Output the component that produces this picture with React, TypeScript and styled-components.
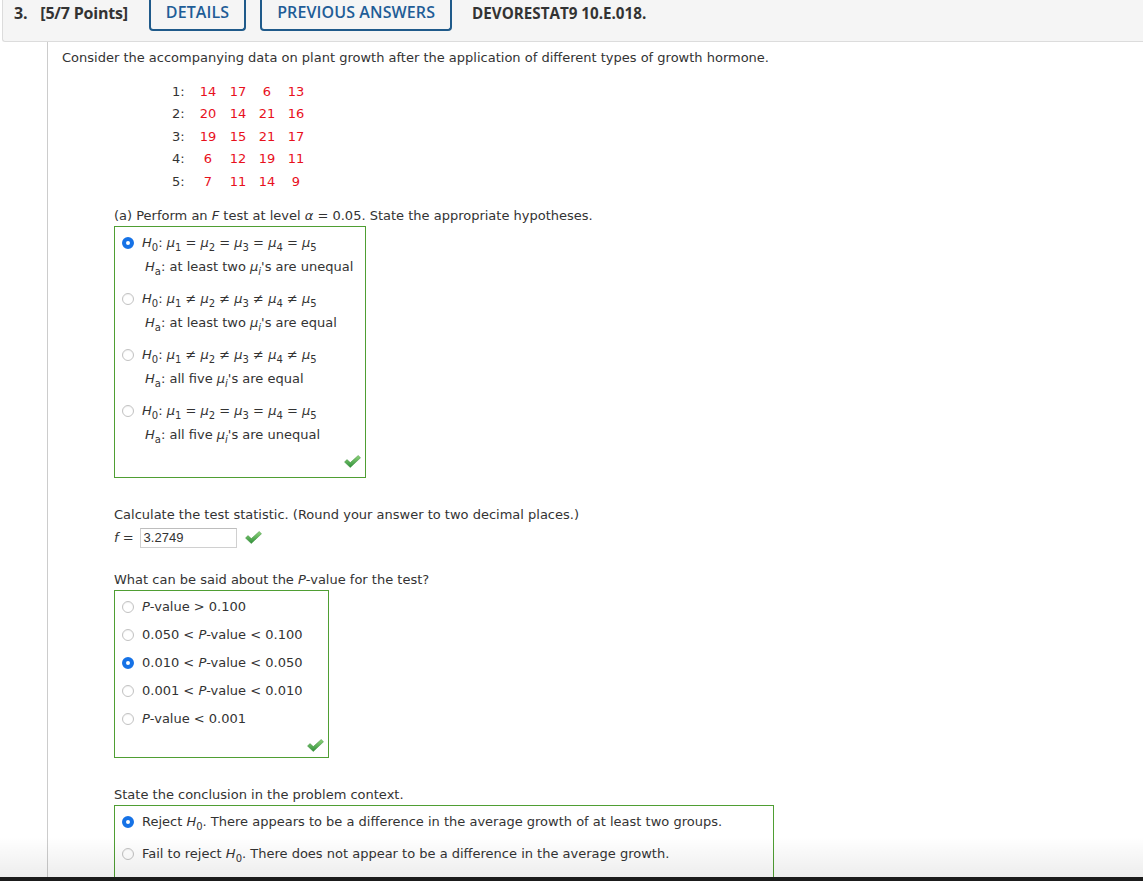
import React from 'react';
import styled, { createGlobalStyle } from 'styled-components';

const GlobalStyle = createGlobalStyle`
  html, body {
    margin: 0;
    padding: 0;
    background: #fff;
    overflow: hidden;
  }
`;

const Page = styled.div`
  position: relative;
  width: 1143px;
  height: 881px;
  overflow: hidden;
  font-family: "DejaVu Sans", Verdana, sans-serif;
  font-size: 13px;
  color: #333;
`;

const Header = styled.header`
  display: flex;
  align-items: flex-start;
  height: 41px;
  margin-left: 2px;
  background: #f5f5f5;
  border-left: 1px solid #dcdcdc;
  border-bottom: 1px solid #dcdcdc;
  border-bottom-left-radius: 3px;
  font-family: "Open Sans", sans-serif;
  font-weight: 700;
  font-size: 16px;
  color: #333;
`;

const QNum = styled.div`
  display: flex;
  gap: 13px;
  padding: 3px 0 0 11px;
  line-height: 20px;
  margin-right: 21px;
  letter-spacing: -0.2px;
`;

const TabButton = styled.div`
  display: flex;
  align-items: center;
  height: 31px;
  box-sizing: border-box;
  padding: 0 15px 5px;
  margin-right: 14px;
  border: 2px solid #1f5a8a;
  border-top: none;
  border-radius: 0 0 4px 4px;
  color: #1f5d97;
  font-weight: 600;
  letter-spacing: 0.1px;
`;

const Title = styled.div`
  padding: 3px 0 0 6px;
  line-height: 20px;
  font-size: 15.2px;
`;

const Body = styled.main`
  margin-left: 47px;
  border-left: 1px solid #ccc;
  padding: 8px 0 0 14px;
  height: 840px;
  box-sizing: border-box;
`;

const Para = styled.p<{ $top?: number }>`
  margin: ${p => p.$top ?? 0}px 0 0;
  line-height: 16px;
`;

const Part = styled.section`
  margin-left: 52px;
`;

const DataGrid = styled.div`
  display: grid;
  grid-template-columns: 21px 30px 30px 28px 30px;
  grid-auto-rows: 22.5px;
  align-items: center;
  margin: 14px 0 0 110px;
  width: max-content;
`;

const RowLabel = styled.span`
  color: #333;
`;

const Num = styled.span`
  color: #e8101c;
  text-align: center;
`;

const Var = styled.i`
  font-style: italic;
`;

const Sub = styled.sub`
  font-size: 10px;
  vertical-align: -4px;
  line-height: 0;
`;

const AnswerBox = styled.div<{ $w: number; $open?: boolean }>`
  width: ${p => p.$w}px;
  box-sizing: border-box;
  border: 1px solid #4f9e33;
  margin-top: 2px;
  padding: 4px 0 ${p => (p.$open ? 40 : 0)}px 7px;
`;

const Option = styled.div<{ $gap?: number }>`
  display: flex;
  align-items: flex-start;
  gap: 8px;
  margin-bottom: ${p => p.$gap ?? 0}px;
`;

const OptText = styled.div<{ $lh: number }>`
  line-height: ${p => p.$lh}px;
`;

const Second = styled.div`
  padding-left: 3px;
`;

const Radio = styled.span<{ $on?: boolean; $top: number }>`
  flex: none;
  width: 12px;
  height: 12px;
  margin-top: ${p => p.$top}px;
  box-sizing: border-box;
  border-radius: 50%;
  background: #fff;
  border: ${p => (p.$on ? '4px solid #1672e6' : '1px solid #c2c2c2')};
  box-shadow: ${p => (p.$on ? 'none' : 'inset 0 1px 1px rgba(0,0,0,0.06)')};
`;

const CheckRow = styled.div<{ $h: number; $right: number }>`
  display: flex;
  justify-content: flex-end;
  align-items: center;
  height: ${p => p.$h}px;
  padding-right: ${p => p.$right}px;
`;

const FRow = styled.div`
  display: flex;
  align-items: center;
  margin-top: 5px;
  height: 20px;
  gap: 6px;
`;

const FInput = styled.div`
  width: 97px;
  height: 20px;
  box-sizing: border-box;
  border: 1px solid #d0d0d0;
  border-top-color: #bdbdbd;
  padding-left: 3px;
  font-family: "Liberation Sans", Arial, sans-serif;
  font-size: 13px;
  line-height: 18px;
  color: #333;
  margin-right: 2px;
`;

const BottomFade = styled.div`
  position: absolute;
  left: 0;
  right: 0;
  bottom: 4px;
  height: 40px;
  background: linear-gradient(rgba(0,0,0,0), rgba(0,0,0,0.07));
  pointer-events: none;
`;

const BottomBar = styled.div`
  position: absolute;
  left: 0;
  right: 0;
  bottom: 0;
  height: 4px;
  background: #1b1b1b;
`;

const Check = () => (
  <svg width="17" height="13" viewBox="0 0 17 13">
    <defs>
      <linearGradient id="chk" x1="0" y1="0" x2="0" y2="1">
        <stop offset="0" stopColor="#8fd57a" />
        <stop offset="1" stopColor="#2f8f3a" />
      </linearGradient>
    </defs>
    <path d="M0.5 7 L3 4.6 L6.3 7.6 L14.2 0.5 L16.5 2.8 L6.3 12.5 Z" fill="url(#chk)" stroke="#3b8a3a" strokeWidth="0.5" />
  </svg>
);

const Mu = ({ i }: { i: string | number }) => (
  <>
    <Var>μ</Var>
    <Sub>{i}</Sub>
  </>
);

const H = ({ s }: { s: string }) => (
  <>
    <Var>H</Var>
    <Sub>{s}</Sub>
  </>
);

const Mui = () => (
  <>
    <Var>μ</Var>
    <Sub>
      <Var>i</Var>
    </Sub>
  </>
);

const data = [
  [14, 17, 6, 13],
  [20, 14, 21, 16],
  [19, 15, 21, 17],
  [6, 12, 19, 11],
  [7, 11, 14, 9],
];

const hyps = [
  { on: true, eq: true, alt: <>at least two <Mui />'s are unequal</> },
  { on: false, eq: false, alt: <>at least two <Mui />'s are equal</> },
  { on: false, eq: false, alt: <>all five <Mui />'s are equal</> },
  { on: false, eq: true, alt: <>all five <Mui />'s are unequal</> },
];

const pOpts: { on: boolean; label: React.ReactNode }[] = [
  { on: false, label: <><Var>P</Var>-value &gt; 0.100</> },
  { on: false, label: <>0.050 &lt; <Var>P</Var>-value &lt; 0.100</> },
  { on: true, label: <>0.010 &lt; <Var>P</Var>-value &lt; 0.050</> },
  { on: false, label: <>0.001 &lt; <Var>P</Var>-value &lt; 0.010</> },
  { on: false, label: <><Var>P</Var>-value &lt; 0.001</> },
];

const Chain = ({ eq }: { eq: boolean }) => {
  const op = eq ? ' = ' : ' ≠ ';
  return (
    <>
      <H s="0" />: <Mu i={1} />{op}<Mu i={2} />{op}<Mu i={3} />{op}<Mu i={4} />{op}<Mu i={5} />
    </>
  );
};

export default function App() {
  return (
    <Page>
      <GlobalStyle />
      <Header>
        <QNum>
          <span>3.</span>
          <span>[5/7 Points]</span>
        </QNum>
        <TabButton>DETAILS</TabButton>
        <TabButton>PREVIOUS ANSWERS</TabButton>
        <Title>DEVORESTAT9 10.E.018.</Title>
      </Header>

      <Body>
        <Para>
          Consider the accompanying data on plant growth after the application of different types of growth hormone.
        </Para>

        <DataGrid>
          {data.map((row, r) => (
            <React.Fragment key={r}>
              <RowLabel>{r + 1}:</RowLabel>
              {row.map((n, c) => (
                <Num key={c}>{n}</Num>
              ))}
            </React.Fragment>
          ))}
        </DataGrid>

        <Part>
          <Para $top={15}>
            (a) Perform an <Var>F</Var> test at level <Var>α</Var> = 0.05. State the appropriate hypotheses.
          </Para>
          <AnswerBox $w={252}>
            {hyps.map((h, k) => (
              <Option key={k} $gap={k < 3 ? 8 : 0}>
                <Radio $on={h.on} $top={6} />
                <OptText $lh={24}>
                  <div>
                    <Chain eq={h.eq} />
                  </div>
                  <Second>
                    <H s="a" />: {h.alt}
                  </Second>
                </OptText>
              </Option>
            ))}
            <CheckRow $h={30} $right={4}>
              <Check />
            </CheckRow>
          </AnswerBox>

          <Para $top={29}>Calculate the test statistic. (Round your answer to two decimal places.)</Para>
          <FRow>
            <span>
              <Var>f</Var> =
            </span>
            <FInput>3.2749</FInput>
            <Check />
          </FRow>

          <Para $top={24}>
            What can be said about the <Var>P</Var>-value for the test?
          </Para>
          <AnswerBox $w={215}>
            {pOpts.map((o, k) => (
              <Option key={k} $gap={4}>
                <Radio $on={o.on} $top={6} />
                <OptText $lh={24}>{o.label}</OptText>
              </Option>
            ))}
            <CheckRow $h={22} $right={4}>
              <Check />
            </CheckRow>
          </AnswerBox>

          <Para $top={29}>State the conclusion in the problem context.</Para>
          <AnswerBox $w={660} $open>
            <Option $gap={8}>
              <Radio $on $top={6} />
              <OptText $lh={24}>
                Reject <H s="0" />. There appears to be a difference in the average growth of at least two groups.
              </OptText>
            </Option>
            <Option>
              <Radio $top={6} />
              <OptText $lh={24}>
                Fail to reject <H s="0" />. There does not appear to be a difference in the average growth.
              </OptText>
            </Option>
          </AnswerBox>
        </Part>
      </Body>

      <BottomFade />
      <BottomBar />
    </Page>
  );
}
